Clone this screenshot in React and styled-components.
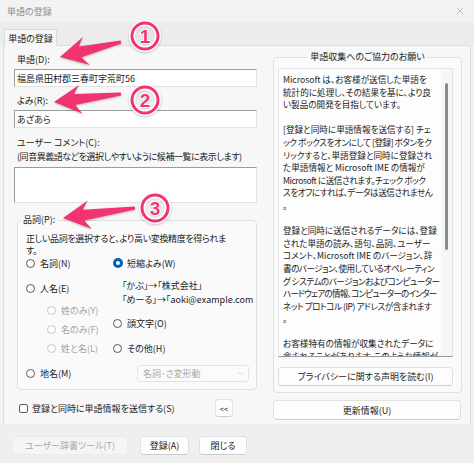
import React from 'react'
import styled, { createGlobalStyle } from 'styled-components'
import { X, ChevronDown } from 'lucide-react'

const GlobalStyle = createGlobalStyle`
  html, body {
    margin: 0;
    padding: 0;
  }
  body {
    font-family: "Noto Sans CJK JP", "Noto Sans", sans-serif;
    font-feature-settings: "palt";
    color: #1b1b1b;
    background: #f3f3f3;
  }
`

const PINK = '#f0346f'

const Window = styled.div`
  position: relative;
  width: 474px;
  height: 463px;
  background: #f3f3f3;
  display: flex;
  flex-direction: column;
  overflow: hidden;
  font-size: 9px;
  font-feature-settings: "palt";
`

const TitleBar = styled.div`
  height: 22px;
  flex-shrink: 0;
  display: flex;
  align-items: center;
  justify-content: space-between;
  padding: 0 8px 0 7px;
  color: #8c8c8c;
`

const TabStrip = styled.div`
  height: 23px;
  flex-shrink: 0;
  display: flex;
  align-items: flex-end;
  padding-left: 4px;
  background: #ececec;
`

const Tab = styled.div`
  position: relative;
  z-index: 1;
  width: 53px;
  height: 17px;
  margin-bottom: -1px;
  box-sizing: border-box;
  display: flex;
  align-items: center;
  justify-content: center;
  background: #f7f7f7;
  border: 1px solid #dadada;
  border-bottom: none;
`

const Panel = styled.div`
  flex: 1;
  margin: 0 3px;
  display: flex;
  gap: 16px;
  padding: 8px 8px 0 10px;
  background: #f7f7f7;
  border: 1px solid #dedede;
  border-bottom: none;
`

const Column = styled.div`
  display: flex;
  flex-direction: column;
  width: ${(p) => p.$w}px;
  flex-shrink: 0;
  margin-top: ${(p) => p.$mt || 0}px;
`

const Label = styled.div`
  line-height: 12px;
  margin-top: ${(p) => p.$mt || 0}px;
  margin-left: 3px;
  letter-spacing: ${(p) => p.$ls || 0}px;
  white-space: nowrap;
`

const TextInput = styled.input`
  height: 18px;
  margin-top: ${(p) => p.$mt || 0}px;
  box-sizing: border-box;
  padding: 0 2px;
  font: inherit;
  font-feature-settings: "palt";
  color: #1b1b1b;
  background: #ffffff;
  border: 1px solid #e2e2e2;
  border-top-color: #9c9c9c;
  border-left-color: #9c9c9c;
  outline: none;
`

const TextArea = styled.textarea`
  height: 36px;
  margin-top: 4px;
  box-sizing: border-box;
  resize: none;
  font: inherit;
  background: #ffffff;
  border: 1px solid #e2e2e2;
  border-top-color: #9c9c9c;
  border-left-color: #9c9c9c;
  outline: none;
`

const Group = styled.fieldset`
  width: ${(p) => p.$w}px;
  margin: ${(p) => p.$m};
  padding: 0;
  box-sizing: border-box;
  min-width: 0;
  border: 1px solid #e0e0e0;
  border-radius: 4px;
  background: #fafafa;
`

const Legend = styled.legend`
  padding: 0 2px;
  line-height: 12px;
  margin: ${(p) => (p.$center ? '0 auto' : '0 0 0 3px')};
  white-space: nowrap;
`

const GroupInner = styled.div`
  display: flex;
  flex-direction: column;
  padding: ${(p) => p.$pad};
`

const Hint = styled.div`
  line-height: 11.5px;
  letter-spacing: -0.35px;
  white-space: nowrap;
`

const RadioCols = styled.div`
  display: flex;
  margin-top: 1px;
`

const RadioCol = styled.div`
  display: flex;
  flex-direction: column;
  width: ${(p) => (p.$w ? `${p.$w}px` : 'auto')};
`

const Radio = styled.div`
  display: flex;
  align-items: center;
  gap: ${(p) => (p.$checked ? 4 : 5)}px;
  height: 12px;
  margin-top: ${(p) => p.$mt || 0}px;
  margin-left: ${(p) => p.$ml || 0}px;
  white-space: nowrap;
  color: ${(p) => (p.$disabled ? '#a3a3a3' : '#1b1b1b')};
`

const RadioDot = styled.span`
  position: relative;
  flex-shrink: 0;
  box-sizing: border-box;
  width: ${(p) => (p.$checked ? 10 : 9)}px;
  height: ${(p) => (p.$checked ? 10 : 9)}px;
  border-radius: 50%;
  border: ${(p) =>
    p.$checked
      ? 'none'
      : `1px solid ${p.$disabled ? '#c8c8c8' : '#5a5a5a'}`};
  background: ${(p) => (p.$checked ? '#005fb8' : '#fdfdfd')};

  &::after {
    content: '';
    display: ${(p) => (p.$checked ? 'block' : 'none')};
    position: absolute;
    left: 3px;
    top: 3px;
    width: 4px;
    height: 4px;
    border-radius: 50%;
    background: #ffffff;
  }
`

const Examples = styled.div`
  margin: 10px 0 0 9px;
  line-height: 14px;
  white-space: nowrap;
`

const PlaceRow = styled.div`
  display: flex;
  align-items: center;
  height: 17px;
  margin-top: 11px;
  padding-right: 7px;
`

const Select = styled.div`
  width: 112px;
  height: 17px;
  margin-left: auto;
  box-sizing: border-box;
  display: flex;
  align-items: center;
  justify-content: space-between;
  padding: 0 3px 0 5px;
  color: #a8a8a8;
  background: #fbfbfb;
  border: 1px solid #e4e4e4;
  border-radius: 3px;
`

const CheckRow = styled.div`
  display: flex;
  align-items: center;
  height: 18px;
  margin-top: 9px;
  padding: 0 24px 0 5px;
  white-space: nowrap;
`

const CheckBox = styled.span`
  width: 9px;
  height: 9px;
  margin-right: 4px;
  box-sizing: border-box;
  border: 1px solid #5a5a5a;
  border-radius: 2px;
  background: #fdfdfd;
`

const Button = styled.button`
  width: ${(p) => (p.$w ? `${p.$w}px` : '100%')};
  height: ${(p) => p.$h || 19}px;
  margin: ${(p) => p.$m || 0};
  padding: 0;
  box-sizing: border-box;
  flex-shrink: 0;
  font: inherit;
  font-size: ${(p) => p.$fs || 9}px;
  font-feature-settings: "palt";
  color: ${(p) => (p.disabled ? '#a9a9a9' : '#1b1b1b')};
  background: ${(p) => (p.disabled ? '#f5f5f5' : '#fdfdfd')};
  border: 1px solid ${(p) => (p.disabled ? '#ebebeb' : '#e0e0e0')};
  border-bottom-color: ${(p) => (p.disabled ? '#ebebeb' : '#cccccc')};
  border-radius: 4px;
  white-space: nowrap;
`

const InfoBox = styled.div`
  height: 289px;
  display: flex;
  box-sizing: border-box;
  background: #fdfdfd;
  border: 1px solid #e4e4e4;
  border-bottom-color: #9a9a9a;
`

const InfoText = styled.div`
  flex: 1;
  min-width: 0;
  overflow: hidden;
  padding: 4px 0 0 4px;
  font-size: 8.6px;
  line-height: 12.6px;
`

const InfoLine = styled.div`
  height: 12.6px;
  white-space: nowrap;
  letter-spacing: ${(p) => p.$ls || 0}px;
`

const ScrollTrack = styled.div`
  width: 11px;
  flex-shrink: 0;
  display: flex;
  justify-content: center;
  background: #f6f6f6;
`

const ScrollThumb = styled.div`
  width: 3px;
  height: 167px;
  margin-top: 14px;
  border-radius: 2px;
  background: #8a8a8a;
`

const BottomBar = styled.div`
  height: 39px;
  flex-shrink: 0;
  display: flex;
  padding: 12px 0 0 12px;
  box-sizing: border-box;
  background: #efefef;
`

const Overlay = styled.svg`
  position: absolute;
  left: 0;
  top: 0;
  pointer-events: none;
  filter: drop-shadow(0 1px 1px rgba(0, 0, 0, 0.22));
`

const infoLines = [
  'Microsoft は、お客様が送信した単語を',
  '統計的に処理し、その結果を基に、より良',
  'い製品の開発を目指しています。',
  '',
  '[登録と同時に単語情報を送信する] チェ',
  'ック ボックスをオンにして [登録] ボタンをク',
  'リックすると、単語登録と同時に登録され',
  'た単語情報と Microsoft IME の情報が',
  'Microsoft に送信されます。チェック ボック',
  'スをオフにすれば、データは送信されません',
  '。',
  '',
  '登録と同時に送信されるデータには、登録',
  'された単語の読み、語句、品詞、ユーザー',
  'コメント、Microsoft IME のバージョン、辞',
  '書のバージョン、使用しているオペレーティン',
  'グ システムのバージョンおよびコンピューター',
  'ハードウェアの情報、コンピューターのインター',
  'ネット プロトコル (IP) アドレスが含まれます',
  '。',
  '',
  'お客様特有の情報が収集されたデータに',
  '含まれることがあります。このような情報が',
]

// katakana-heavy lines run wider in this font than in the original
const lineSpacing = { 5: -0.45, 8: -0.45, 9: -0.45, 15: -0.5, 16: -0.5, 17: -0.8, 18: -0.45 }

// tapered arrow from tail to tip
const arrowPath = (tip, tail) => {
  const dx = tail[0] - tip[0]
  const dy = tail[1] - tip[1]
  const len = Math.hypot(dx, dy)
  const ux = dx / len
  const uy = dy / len
  const nx = -uy
  const ny = ux
  const p = (d, o) =>
    `${(tip[0] + ux * d + nx * o).toFixed(1)} ${(tip[1] + uy * d + ny * o).toFixed(1)}`
  return `M${p(0, 0)} L${p(27, 15)} Q${p(22, 8)} ${p(21, 5.5)} L${p(len, 1.5)} L${p(len, -1.5)} L${p(21, -5.5)} Q${p(22, -8)} ${p(27, -14)} Z`
}

const Marker = ({ tip, tail, cx, cy, n }) => (
  <g>
    <path d={arrowPath(tip, tail)} fill={PINK} />
    <circle cx={cx} cy={cy} r={13} fill="#ffffff" fillOpacity="0.35" stroke="#ffffff" strokeWidth="6" />
    <circle cx={cx} cy={cy} r={13} fill="none" stroke={PINK} strokeWidth="3" />
    <text
      x={cx}
      y={cy + 6.5}
      textAnchor="middle"
      fontFamily="'Liberation Sans', Arial, sans-serif"
      fontWeight="700"
      fontSize="19"
      fill={PINK}
      stroke="#ffffff"
      strokeWidth="1.5"
      paintOrder="stroke"
    >
      {n}
    </text>
  </g>
)

const App = () => {
  return (
    <>
      <GlobalStyle />
      <Window>
        <TitleBar>
          <span>単語の登録</span>
          <X size={12} strokeWidth={1.2} color="#9a9a9a" />
        </TitleBar>
        <TabStrip>
          <Tab>単語の登録</Tab>
        </TabStrip>
        <Panel>
          <Column $w={243}>
            <Label>単語(D):</Label>
            <TextInput $mt={3} defaultValue="福島県田村郡三春町字荒町56" />
            <Label $mt={8}>よみ(R):</Label>
            <TextInput $mt={3} defaultValue="あざあら" />
            <Label $mt={9}>ユーザー コメント(C):</Label>
            <Label $mt={2} $ls={-0.45}>
              (同音異義語などを選択しやすいように候補一覧に表示します)
            </Label>
            <TextArea />
            <Group $w={240} $m="11px 0 0 3px">
              <Legend>品詞(P):</Legend>
              <GroupInner $pad="7px 0 7px 8px">
                <Hint>
                  正しい品詞を選択すると、より高い変換精度を得られま
                  <br />す。
                </Hint>
                <RadioCols>
                  <RadioCol $w={87}>
                    <Radio>
                      <RadioDot />
                      名詞(N)
                    </Radio>
                    <Radio $mt={13}>
                      <RadioDot />
                      人名(E)
                    </Radio>
                    <Radio $mt={10} $ml={21} $disabled>
                      <RadioDot $disabled />
                      姓のみ(Y)
                    </Radio>
                    <Radio $mt={7} $ml={21} $disabled>
                      <RadioDot $disabled />
                      名のみ(F)
                    </Radio>
                    <Radio $mt={7} $ml={21} $disabled>
                      <RadioDot $disabled />
                      姓と名(L)
                    </Radio>
                  </RadioCol>
                  <RadioCol>
                    <Radio $checked>
                      <RadioDot $checked />
                      短縮よみ(W)
                    </Radio>
                    <Examples>
                      「かぶ」→「株式会社」
                      <br />
                      「めーる」→「aoki@example.com
                    </Examples>
                    <Radio $mt={10}>
                      <RadioDot />
                      顔文字(O)
                    </Radio>
                    <Radio $mt={13}>
                      <RadioDot />
                      その他(H)
                    </Radio>
                  </RadioCol>
                </RadioCols>
                <PlaceRow>
                  <Radio>
                    <RadioDot />
                    地名(M)
                  </Radio>
                  <Select>
                    <span>名詞･さ変形動</span>
                    <ChevronDown size={9} strokeWidth={1.2} color="#b5b5b5" />
                  </Select>
                </PlaceRow>
              </GroupInner>
            </Group>
            <CheckRow>
              <CheckBox />
              登録と同時に単語情報を送信する(S)
              <Button $w={18} $h={18} $m="0 0 0 auto" $fs={7.5}>
                &lt;&lt;
              </Button>
            </CheckRow>
          </Column>
          <Column $w={189} $mt={-3}>
            <Group $w={189} $m="0">
              <Legend $center>単語収集へのご協力のお願い</Legend>
              <GroupInner $pad="5px 8px 6px 4px">
                <InfoBox>
                  <InfoText>
                    {infoLines.map((line, i) => (
                      <InfoLine key={i} $ls={lineSpacing[i]}>
                        {line}
                      </InfoLine>
                    ))}
                  </InfoText>
                  <ScrollTrack>
                    <ScrollThumb />
                  </ScrollTrack>
                </InfoBox>
                <Button $m="10px 0 0 0">プライバシーに関する声明を読む(I)</Button>
              </GroupInner>
            </Group>
            <Button $w={188} $h={20} $m="7px 0 0 0">
              更新情報(U)
            </Button>
          </Column>
        </Panel>
        <BottomBar>
          <Button $w={116} disabled>
            ユーザー辞書ツール(T)
          </Button>
          <Button $w={49} $m="0 0 0 12px">
            登録(A)
          </Button>
          <Button $w={48} $m="0 0 0 10px">
            閉じる
          </Button>
        </BottomBar>
        <Overlay width="474" height="463" viewBox="0 0 474 463">
          <Marker tip={[60, 57]} tail={[121, 42]} cx={145} cy={36} n="1" />
          <Marker tip={[54, 102]} tail={[121, 94]} cx={145} cy={100} n="2" />
          <Marker tip={[63, 218]} tail={[135, 208]} cx={155} cy={208} n="3" />
        </Overlay>
      </Window>
    </>
  )
}

export default App
